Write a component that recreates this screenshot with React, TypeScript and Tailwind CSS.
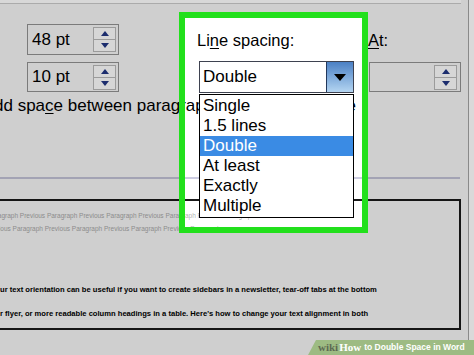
import React from "react";

const Arrow: React.FC<{ up?: boolean }> = ({ up }) => (
  <svg width="8" height="5" viewBox="0 0 8 5">
    {up ? (
      <polygon points="4,0 8,5 0,5" fill="#1c2d6e" />
    ) : (
      <polygon points="0,0 8,0 4,5" fill="#1c2d6e" />
    )}
  </svg>
);

const SpinButtons: React.FC = () => (
  <div className="flex flex-col w-[23px] h-[25px] border border-[#9b9b9b]">
    <div className="flex-1 flex items-center justify-center border-b border-[#9b9b9b] bg-[#d6d6d6]">
      <Arrow up />
    </div>
    <div className="flex-1 flex items-center justify-center bg-[#d6d6d6]">
      <Arrow />
    </div>
  </div>
);

const Spinner: React.FC<{ value?: string; className: string }> = ({ value, className }) => (
  <div className={`flex items-center justify-between border border-[#7b7b7b] pl-[4px] pr-[2px] ${className}`}>
    <span className="text-[17px] leading-[20px]">{value}</span>
    <SpinButtons />
  </div>
);

const items = ["Single", "1.5 lines", "Double", "At least", "Exactly", "Multiple"];

const App: React.FC = () => {
  return (
    <div className="relative w-[474px] h-[355px] overflow-hidden bg-[#cfcfcf] font-['Liberation_Sans',Arial,sans-serif] text-black">
      <div className="flex h-full">
        <div className="w-[469px] h-full flex flex-col border-r border-[#8a8a8a]">
          <div className="h-[4px] mr-[7px] bg-[#d8d8d8] border-b border-[#ababab]" />

          <div className="flex items-start mt-[20px]">
            <div className="ml-[27px] w-[92px] flex flex-col gap-[7px]">
              <Spinner value="48 pt" className="h-[31px]" />
              <Spinner value="10 pt" className="h-[30px]" />
            </div>

            <div className="ml-[78px] w-[160px] flex flex-col">
              <div className="h-[37px] pt-[6px] text-[16.5px] leading-[20px]">
                Li<span className="underline underline-offset-2">n</span>e spacing:
              </div>
              <div className="relative z-10 ml-[2px] w-[155px] h-[32px] flex border border-[#3e4250] bg-white">
                <div className="flex-1 pl-[3px] text-[17px] leading-[30px]">Double</div>
                <div className="w-[27px] h-full flex items-center justify-center border-l border-[#22385c] bg-linear-to-b from-[#4b80c4] to-[#b4d5f1]">
                  <svg width="12" height="7" viewBox="0 0 12 7">
                    <polygon points="0,0 12,0 6,7" fill="#000" />
                  </svg>
                </div>
              </div>
            </div>

            <div className="ml-[11px] flex flex-col">
              <div className="h-[38px] pt-[6px] text-[16.5px] leading-[20px]">
                <span className="underline underline-offset-2">A</span>t:
              </div>
              <Spinner className="ml-[1px] w-[92px] h-[30px] pr-[3px]" />
            </div>
          </div>

          <div className="mt-[3px] -ml-[6px] whitespace-nowrap text-[17px] leading-[20px]">
            dd spa<span className="underline underline-offset-2">c</span>e between paragraphs of the same style
          </div>

          <div className="mt-[61px] w-[460px] h-[2px] bg-[#a3a3b4]" />

          <div className="mt-[20px] -ml-[10px] w-[471px] h-[131px] border-2 border-[#151515] overflow-hidden">
            <div className="pt-[8px] text-[6.5px] leading-[13px] text-[#8c8c8c] whitespace-nowrap">
              <div>aragraph Previous Paragraph Previous Paragraph Previous Paragraph Previous Paragraph</div>
              <div>evious Paragraph Previous Paragraph Previous Paragraph Previous Paragraph</div>
            </div>
            <div className="mt-[43px] pl-[8px] text-[7.6px] leading-[24px] font-bold text-black whitespace-nowrap">
              <div>ur text orientation can be useful if you want to create sidebars in a newsletter, tear-off tabs at the bottom</div>
              <div>r flyer, or more readable column headings in a table. Here's how to change your text alignment in both</div>
            </div>
          </div>
        </div>
        <div className="flex-1 bg-[#d9d9d9]" />
      </div>

      {/* highlight frame */}
      <div className="absolute left-[179px] top-[12px] w-[189px] h-[221px] z-[5] border-[6px] border-[#22e01c] backdrop-brightness-125" />

      {/* open list */}
      <div className="absolute left-[199px] top-[94px] w-[155px] h-[124px] z-20 border border-black bg-white pt-[1px]">
        {items.map((item) => (
          <div
            key={item}
            className={`h-[20px] pl-[3px] text-[17px] leading-[20px] ${
              item === "Double" ? "bg-[#3a8be4] text-white" : ""
            }`}
          >
            {item}
          </div>
        ))}
      </div>

      {/* watermark */}
      <div className="absolute right-0 bottom-0 w-[166px] h-[15px] z-30 flex items-center pl-[10px] bg-[#9dbb83] [clip-path:polygon(8px_0,100%_0,100%_100%,0_100%)] whitespace-nowrap">
        <span className="font-['Liberation_Serif',serif] font-bold text-[11px] text-[#5d6a52]">wiki</span>
        <span className="font-['Liberation_Serif',serif] font-bold text-[11px] text-white ml-[1px]">How</span>
        <span className="font-bold text-[8.5px] text-white ml-[3px]">to Double Space in Word</span>
      </div>
    </div>
  );
};

export default App;
